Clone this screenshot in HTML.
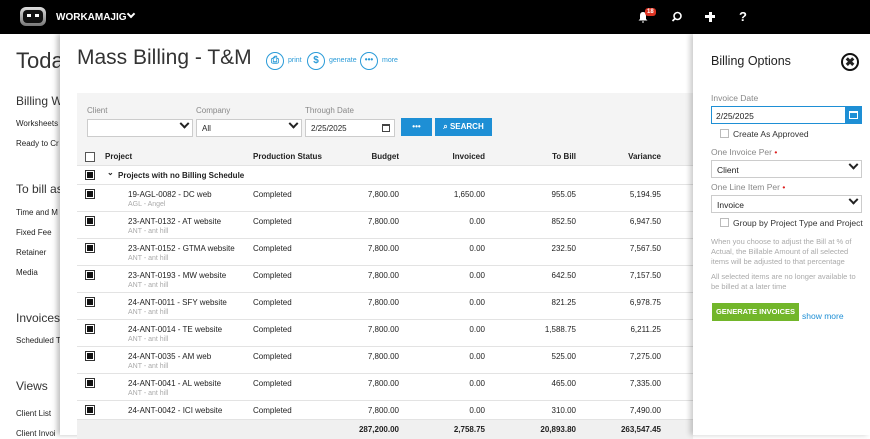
<!DOCTYPE html>
<html><head><style>
*{box-sizing:border-box;margin:0;padding:0}
body{width:870px;height:435px;overflow:hidden;font-family:"Liberation Sans",sans-serif;background:#fff;position:relative;color:#222}
.top{position:absolute;left:0;top:0;width:870px;height:34px;background:#000}
.abs{position:absolute;white-space:nowrap}
.bg{position:absolute;left:0;top:34px;width:870px;height:401px;background:#fff}
.modal{position:absolute;left:60px;top:34px;width:634px;height:401px;background:#fff;box-shadow:-3px 0 5px rgba(0,0,0,.25)}
.right{position:absolute;left:693px;top:34px;width:177px;height:401px;background:#fff;box-shadow:-3px 0 5px rgba(0,0,0,.2)}
.cb{position:absolute;width:10px;height:10px;border:1px solid #333;background:#fff}
.cb.f::after{content:"";position:absolute;left:1px;top:1px;width:6px;height:6px;background:#111}
.row{position:absolute;left:17px;width:616px;border-top:1px solid #e3e3e3;font-size:8px;color:#222}
.num{position:absolute;text-align:right;width:80px}
.sub{color:#aaa;font-size:7px}
.sel{position:absolute;height:18px;border:1px solid #ccc;background:#fff;font-size:8px;padding:4px 5px}
.chev{position:absolute;right:4px;top:3px;width:7px;height:7px;border-right:2px solid #222;border-bottom:2px solid #222;transform:rotate(45deg) translate(-2px,-2px)}
.lbl{position:absolute;font-size:8px;color:#888}
.ic{position:absolute;width:18px;height:18px;border:1.5px solid #2a9bd8;border-radius:50%;color:#2a9bd8;font-size:10px;text-align:center;line-height:15px;font-weight:bold}
</style></head><body>
<div class="top">
 <div class="abs" style="left:20px;top:7px;width:26px;height:19px;border-radius:6px;background:linear-gradient(#ddd,#777);"></div>
 <div class="abs" style="left:23px;top:10px;width:20px;height:13px;border-radius:4px;background:#111"></div>
 <div class="abs" style="left:27px;top:14px;width:4px;height:3px;background:#fff"></div>
 <div class="abs" style="left:35px;top:14px;width:4px;height:3px;background:#fff"></div>
 <div class="abs" style="left:56px;top:12px;color:#fff;font-size:10px;font-weight:bold">WORKAMAJIG</div>
 <div class="abs" style="left:128px;top:11px;width:6px;height:6px;border-right:2px solid #fff;border-bottom:2px solid #fff;transform:rotate(45deg)"></div>
 <svg class="abs" style="left:637px;top:11px" width="12" height="12" viewBox="0 0 12 12"><path d="M6 1C3.5 1 3 3 3 5v3L1.5 9.5h9L9 8V5C9 3 8.5 1 6 1z M5 10.5h2v1H5z" fill="#fff"/></svg>
 <div class="abs" style="left:645px;top:8px;background:#d32;color:#fff;font-size:6px;font-weight:bold;border-radius:3px;padding:0 2px;line-height:8px">18</div>
 <svg class="abs" style="left:671px;top:11px" width="12" height="12" viewBox="0 0 12 12"><circle cx="6.5" cy="5" r="3.5" fill="none" stroke="#fff" stroke-width="1.6"/><path d="M4 7.5L1.5 10" stroke="#fff" stroke-width="1.8"/></svg>
 <div class="abs" style="left:705px;top:15px;width:10px;height:3px;background:#fff"></div>
 <div class="abs" style="left:708.5px;top:11.5px;width:3px;height:10px;background:#fff"></div>
 <div class="abs" style="left:739px;top:9px;color:#fff;font-size:13px;font-weight:bold">?</div>
</div>
<div class="bg">
 <div class="abs" style="left:16px;top:14px;font-size:22px;color:#333">Today</div>
 <div class="abs" style="left:16px;top:60px;font-size:12px;color:#333">Billing W</div>
 <div class="abs" style="left:16px;top:85px;font-size:8px">Worksheets</div>
 <div class="abs" style="left:16px;top:105px;font-size:8px">Ready to Cr</div>
 <div class="abs" style="left:16px;top:148px;font-size:12px;color:#333">To bill as</div>
 <div class="abs" style="left:16px;top:174px;font-size:8px">Time and M</div>
 <div class="abs" style="left:16px;top:194px;font-size:8px">Fixed Fee</div>
 <div class="abs" style="left:16px;top:214px;font-size:8px">Retainer</div>
 <div class="abs" style="left:16px;top:234px;font-size:8px">Media</div>
 <div class="abs" style="left:16px;top:277px;font-size:12px;color:#333">Invoices</div>
 <div class="abs" style="left:16px;top:302px;font-size:8px">Scheduled T</div>
 <div class="abs" style="left:16px;top:345px;font-size:12px;color:#333">Views</div>
 <div class="abs" style="left:16px;top:375px;font-size:8px">Client List</div>
 <div class="abs" style="left:16px;top:395px;font-size:8px">Client Invoi</div>
</div>
<div class="modal">
 <div class="abs" style="left:17px;top:12px;font-size:21px;color:#333">Mass Billing - T&amp;M</div>
 <div class="ic" style="left:206px;top:18px">⎙</div><div class="abs" style="left:228px;top:23px;font-size:7px;color:#2a9bd8">print</div>
 <div class="ic" style="left:247px;top:18px">$</div><div class="abs" style="left:269px;top:23px;font-size:7px;color:#2a9bd8">generate</div>
 <div class="ic" style="left:300px;top:18px;font-size:8px;line-height:13px">•••</div><div class="abs" style="left:322px;top:23px;font-size:7px;color:#2a9bd8">more</div>
 <div class="abs" style="left:17px;top:59px;width:616px;height:54px;background:#f4f4f4"></div>
 <div class="lbl" style="left:27px;top:72px">Client</div>
 <div class="lbl" style="left:136px;top:72px">Company</div>
 <div class="lbl" style="left:245px;top:72px">Through Date</div>
 <div class="sel" style="left:27px;top:85px;width:106px"><div class="chev"></div></div>
 <div class="sel" style="left:136px;top:85px;width:106px">All<div class="chev"></div></div>
 <div class="sel" style="left:245px;top:85px;width:90px">2/25/2025<div class="abs" style="right:4px;top:4px;width:8px;height:8px;border:1px solid #444;border-top-width:2px"></div></div>
 <div class="abs" style="left:341px;top:84px;width:31px;height:18px;background:#1e8fd5;color:#fff;font-size:8px;text-align:center;line-height:17px;font-weight:bold">•••</div>
 <div class="abs" style="left:375px;top:84px;width:57px;height:18px;background:#1e8fd5;color:#fff;font-size:8px;text-align:center;line-height:18px;font-weight:bold">⌕ SEARCH</div>
 <div class="row" style="top:113px;height:18px;background:#f4f4f4;font-weight:bold;border-top:none">
  <div class="cb" style="left:8px;top:5px;border-color:#555"></div>
  <div class="abs" style="left:28px;top:5px">Project</div>
  <div class="abs" style="left:176px;top:5px">Production Status</div>
  <div class="num" style="left:242px;top:5px">Budget</div>
  <div class="num" style="left:328px;top:5px">Invoiced</div>
  <div class="num" style="left:419px;top:5px">To Bill</div>
  <div class="num" style="left:504px;top:5px">Variance</div>
 </div>
 <div class="row" style="top:131px;height:19px;font-weight:bold">
  <div class="cb f" style="left:8px;top:4px"></div>
  <div class="abs" style="left:30px;top:2px;font-size:8px">⌄</div>
  <div class="abs" style="left:41px;top:5px">Projects with no Billing Schedule</div>
 </div>
 <div id="rows"></div>
 <div class="row" style="top:385px;height:20px;background:#f0f0f0;font-weight:bold">
  <div class="num" style="left:242px;top:5px">287,200.00</div>
  <div class="num" style="left:328px;top:5px">2,758.75</div>
  <div class="num" style="left:419px;top:5px">20,893.80</div>
  <div class="num" style="left:504px;top:5px">263,547.45</div>
 </div>
</div>
<div class="right">
 <div class="abs" style="left:18px;top:20px;font-size:12.5px;color:#222">Billing Options</div>
 <div class="abs" style="left:148px;top:19px;width:18px;height:18px;border:2px solid #111;border-radius:50%;font-size:12px;font-weight:bold;text-align:center;line-height:14px">✖</div>
 <div class="lbl" style="left:18px;top:59px;font-size:8.5px">Invoice Date</div>
 <div class="abs" style="left:18px;top:72px;width:151px;height:18px;border:1px solid #1e8fd5;font-size:8.5px;padding:4px 4px">2/25/2025</div>
 <div class="abs" style="left:152px;top:72px;width:17px;height:18px;background:#1e8fd5"></div>
 <div class="abs" style="left:156px;top:77px;width:9px;height:8px;border:1px solid #fff;border-top-width:2px"></div>
 <div class="abs" style="left:27px;top:95px;width:9px;height:9px;border:1px solid #bbb"></div>
 <div class="abs" style="left:40px;top:95px;font-size:8.5px;color:#333">Create As Approved</div>
 <div class="lbl" style="left:18px;top:113px;font-size:8.5px">One Invoice Per <span style="color:#d22">•</span></div>
 <div class="sel" style="left:18px;top:126px;width:151px;height:18px;font-size:8.5px">Client<div class="chev"></div></div>
 <div class="lbl" style="left:18px;top:148px;font-size:8.5px">One Line Item Per <span style="color:#d22">•</span></div>
 <div class="sel" style="left:18px;top:161px;width:151px;height:18px;font-size:8.5px">Invoice<div class="chev"></div></div>
 <div class="abs" style="left:27px;top:184px;width:9px;height:9px;border:1px solid #bbb"></div>
 <div class="abs" style="left:40px;top:184px;font-size:8.5px;color:#333">Group by Project Type and Project</div>
 <div class="abs" style="left:18px;top:203px;font-size:7.5px;color:#aaa;line-height:10px;white-space:normal;width:148px">When you choose to adjust the Bill at % of Actual, the Billable Amount of all selected items will be adjusted to that percentage</div>
 <div class="abs" style="left:18px;top:238px;font-size:7.5px;color:#aaa;line-height:10px;white-space:normal;width:152px">All selected items are no longer available to be billed at a later time</div>
 <div class="abs" style="left:19px;top:269px;width:87px;height:18px;background:#72b62a;color:#fff;font-size:7.5px;font-weight:bold;text-align:center;line-height:18px">GENERATE INVOICES</div>
 <div class="abs" style="left:109px;top:277px;font-size:8.5px;color:#1e8fd5">show more</div>
</div>
<script>
var d=[["19-AGL-0082 - DC web","AGL - Angel","1,650.00","955.05","5,194.95"],
["23-ANT-0132 - AT website","ANT - ant hill","0.00","852.50","6,947.50"],
["23-ANT-0152 - GTMA website","ANT - ant hill","0.00","232.50","7,567.50"],
["23-ANT-0193 - MW website","ANT - ant hill","0.00","642.50","7,157.50"],
["24-ANT-0011 - SFY website","ANT - ant hill","0.00","821.25","6,978.75"],
["24-ANT-0014 - TE website","ANT - ant hill","0.00","1,588.75","6,211.25"],
["24-ANT-0035 - AM web","ANT - ant hill","0.00","525.00","7,275.00"],
["24-ANT-0041 - AL website","ANT - ant hill","0.00","465.00","7,335.00"],
["24-ANT-0042 - ICI website","","0.00","310.00","7,490.00"]];
var h="";d.forEach(function(r,i){var t=150+i*27;
h+='<div class="row" style="top:'+t+'px;height:'+(i==8?19:27)+'px"><div class="cb f" style="left:8px;top:4px"></div><div class="abs" style="left:51px;top:5px">'+r[0]+'</div><div class="abs sub" style="left:51px;top:16px">'+r[1]+'</div><div class="abs" style="left:176px;top:5px">Completed</div><div class="num" style="left:242px;top:5px">7,800.00</div><div class="num" style="left:328px;top:5px">'+r[2]+'</div><div class="num" style="left:419px;top:5px">'+r[3]+'</div><div class="num" style="left:504px;top:5px">'+r[4]+'</div></div>';});
document.getElementById("rows").outerHTML=h;
</script>
</body></html>
